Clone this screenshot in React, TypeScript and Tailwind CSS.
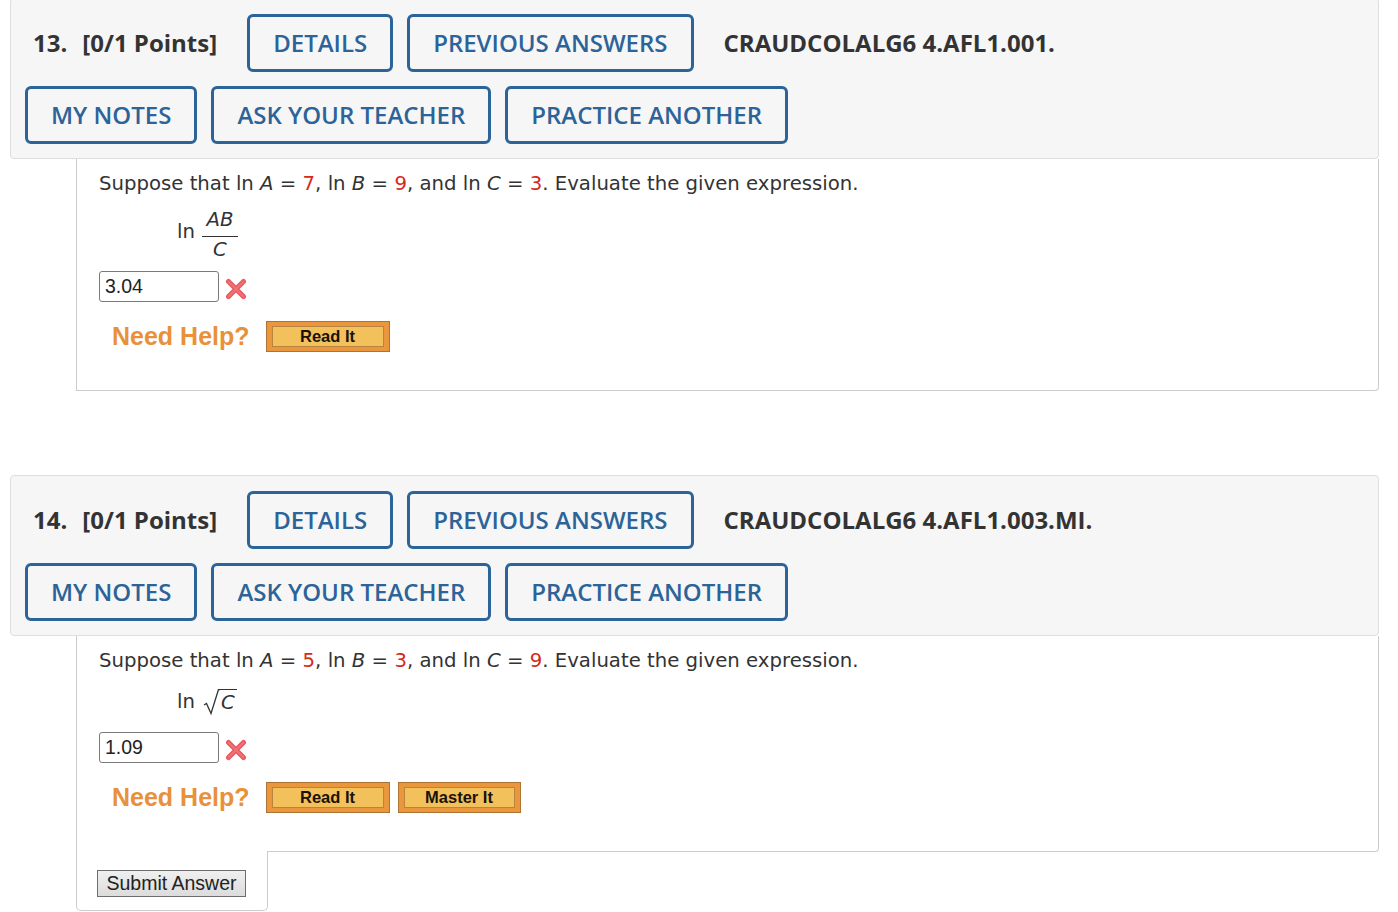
import React from 'react';

const HEAD_FONT = { fontFamily: '"Open Sans", "Noto Sans", sans-serif' };
const BODY_FONT = { fontFamily: '"DejaVu Sans", Verdana, sans-serif' };
const ARIAL = { fontFamily: '"Liberation Sans", Arial, sans-serif' };

const OutlineButton: React.FC<{ label: string }> = ({ label }) => (
  <button
    className="h-[58px] px-[23px] rounded-[6px] border-[3px] border-[#2c6398] bg-transparent text-[24px] leading-[30px] font-semibold text-[#2c6398]"
    style={HEAD_FONT}
  >
    {label}
  </button>
);

const WrongMark: React.FC = () => (
  <svg width="22" height="22" viewBox="0 0 22 22" className="mt-[7px]">
    <path d="M3.5 3.5 L18.5 18.5 M18.5 3.5 L3.5 18.5" stroke="#e9585f" strokeWidth="5" strokeLinecap="round" />
    <path d="M3.5 3.5 L18.5 18.5 M18.5 3.5 L3.5 18.5" stroke="#f48a8f" strokeWidth="1.8" strokeLinecap="round" opacity="0.55" />
  </svg>
);

const HelpButton: React.FC<{ label: string; width: string }> = ({ label, width }) => (
  <button
    className={`${width} h-[31px] border border-[#ad7335] bg-[#e9963c] px-[5px] py-[4px]`}
    style={ARIAL}
  >
    <span className="flex h-full w-full items-center justify-center border border-[#b8843e] bg-[#f3c15c] text-[16.5px] leading-none font-bold text-[#1a1208]">
      {label}
    </span>
  </button>
);

const Red: React.FC<{ children: React.ReactNode }> = ({ children }) => (
  <span className="text-[#d42a1e]">{children}</span>
);

const V: React.FC<{ children: React.ReactNode }> = ({ children }) => <i>{children}</i>;

type QuestionProps = {
  num: number;
  code: string;
  a: string;
  b: string;
  c: string;
  expr: React.ReactNode;
  answer: string;
  master?: boolean;
  submit?: boolean;
};

const Question: React.FC<QuestionProps> = ({ num, code, a, b, c, expr, answer, master, submit }) => (
  <section>
    {/* header bar */}
    <div className="rounded-[4px] border border-[#dedede] bg-[#f6f6f6] pl-[14px] pt-[15px] pb-[14px]">
      <div className="flex items-center">
        <div className="ml-[8px] mr-[30px] flex text-[24px] leading-[32px] font-bold text-[#333333]" style={HEAD_FONT}>
          <span>{num}.</span>
          <span className="ml-[15px]">[0/1 Points]</span>
        </div>
        <div className="flex gap-[14px]">
          <OutlineButton label="DETAILS" />
          <OutlineButton label="PREVIOUS ANSWERS" />
        </div>
        <div className="ml-[30px] text-[24px] leading-[32px] font-bold text-[#333333]" style={HEAD_FONT}>
          {code}
        </div>
      </div>
      <div className="mt-[14px] flex gap-[14px]">
        <OutlineButton label="MY NOTES" />
        <OutlineButton label="ASK YOUR TEACHER" />
        <OutlineButton label="PRACTICE ANOTHER" />
      </div>
    </div>

    {/* question body */}
    <div className="ml-[66px] rounded-br-[4px] border-x border-b border-[#cccccc] bg-white pl-[22px] pt-[13px] pb-[38px]">
      <p className="text-[19.7px] leading-[24px] text-[#333333]" style={BODY_FONT}>
        Suppose that ln <V>A</V> = <Red>{a}</Red>, ln <V>B</V> = <Red>{b}</Red>, and ln <V>C</V> ={' '}
        <Red>{c}</Red>. Evaluate the given expression.
      </p>
      <div className="ml-[78px]" style={BODY_FONT}>
        {expr}
      </div>
      <div className="flex h-[31px] items-start gap-[6px]">
        <div
          className="flex h-[31px] w-[120px] items-center rounded-[3px] border border-[#7a7a7a] bg-white pl-[5px] text-[19.5px] leading-none text-[#222]"
          style={ARIAL}
        >
          {answer}
        </div>
        <WrongMark />
      </div>
      <div className="mt-[19px] flex h-[31px] items-center">
        <span className="ml-[13px] mr-[16px] text-[25px] leading-[31px] font-bold text-[#e8913a]" style={ARIAL}>
          Need Help?
        </span>
        <div className="flex gap-[8px]">
          <HelpButton label="Read It" width="w-[124px]" />
          {master && <HelpButton label="Master It" width="w-[123px]" />}
        </div>
      </div>
    </div>

    {submit && (
      <div className="-mt-px ml-[66px] w-[192px] rounded-b-[5px] border-x border-b border-[#cccccc] bg-white pl-[20px] pt-[19px] pb-[13px]">
        <button
          className="block h-[27px] w-[149px] border border-[#6d6d6d] bg-gradient-to-b from-[#f0f0f0] to-[#dcdcdc] text-[19.5px] leading-none text-[#222]"
          style={ARIAL}
        >
          Submit Answer
        </button>
      </div>
    )}
  </section>
);

export default function App() {
  return (
    <div className="h-[912px] w-[1398px] overflow-hidden bg-white">
      <div className="-mt-[2px] pl-[10px] pr-[19px]">
        <Question
          num={13}
          code="CRAUDCOLALG6 4.AFL1.001."
          a="7"
          b="9"
          c="3"
          answer="3.04"
          expr={
            <div className="mt-[11px] mb-[8px] flex items-center text-[19.7px] text-[#333333]">
              <span className="mr-[7px] -mt-[6px] leading-[26px]">ln</span>
              <span className="inline-flex flex-col items-center">
                <span className="px-[3px] pb-[3px] leading-[26px]">
                  <i>AB</i>
                </span>
                <span className="h-px w-[36px] bg-[#333333]" />
                <span className="leading-[26px]">
                  <i>C</i>
                </span>
              </span>
            </div>
          }
        />
        <div className="h-[84px]" />
        <Question
          num={14}
          code="CRAUDCOLALG6 4.AFL1.003.MI."
          a="5"
          b="3"
          c="9"
          answer="1.09"
          master
          submit
          expr={
            <div className="mt-[16px] mb-[17px] flex items-start text-[19.7px] text-[#333333]">
              <span className="mr-[8px] leading-[26px]">ln</span>
              <svg width="17" height="26" viewBox="0 0 17 26">
                <path d="M1 16 L3.5 14.5 L8 24.5 L15.5 0.5 L17 0.5" stroke="#333" strokeWidth="1.3" fill="none" />
              </svg>
              <span className="border-t border-[#333333] pl-[1px] pr-[2px] leading-[25px]">
                <i>C</i>
              </span>
            </div>
          }
        />
      </div>
    </div>
  );
}
